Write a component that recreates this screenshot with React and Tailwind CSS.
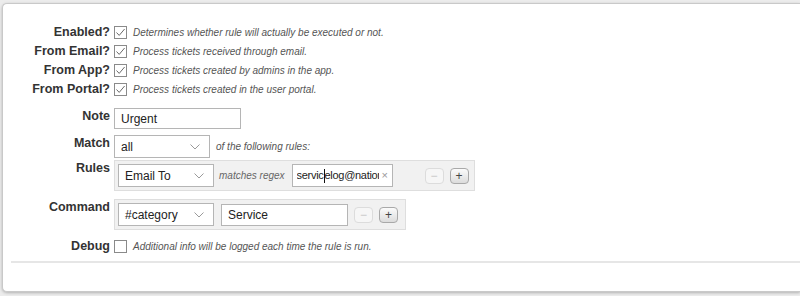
import React from 'react';

const font = { fontFamily: '"Liberation Sans", Arial, sans-serif' };

function Check({ checked }) {
  return (
    <span className="inline-flex h-[13px] w-[13px] shrink-0 items-center justify-center border border-[#8a8a8a] bg-white">
      {checked && (
        <svg width="11" height="11" viewBox="0 0 11 11">
          <path d="M1.5 5.5 L4.2 8.4 L9.6 2" fill="none" stroke="#6a6a6a" strokeWidth="1" />
        </svg>
      )}
    </span>
  );
}

function Chevron() {
  return (
    <svg width="10" height="6" viewBox="0 0 10 6" className="shrink-0">
      <path d="M0.5 0.5 L5 5 L9.5 0.5" fill="none" stroke="#9a9a9a" strokeWidth="1" />
    </svg>
  );
}

function Select({ value }) {
  return (
    <div className="flex h-[23px] w-[96px] shrink-0 items-center justify-between border border-[#b5b5b5] bg-white pl-[6px] pr-[9px] text-[12px] text-[#222]">
      <span>{value}</span>
      <Chevron />
    </div>
  );
}

function SmallButton({ children, disabled }) {
  return (
    <span
      className={`flex h-[16px] w-[19px] shrink-0 items-center justify-center rounded-[4px] border text-[12px] leading-none ${
        disabled
          ? 'border-[#dcdcdc] bg-[#f6f6f6] text-[#c8c8c8]'
          : 'border-[#a9a9a9] bg-gradient-to-b from-[#fbfbfb] to-[#dcdcdc] text-[#444]'
      }`}
    >
      {children}
    </span>
  );
}

function CheckRow({ label, checked, text }) {
  return (
    <div className="flex h-[19px] items-center gap-[4px]">
      <div className="w-[107px] text-right text-[12.5px] font-bold text-[#333]">{label}</div>
      <Check checked={checked} />
      <span className="pl-[2px] text-[10px] italic text-[#555]">{text}</span>
    </div>
  );
}

function Field({ label, children, className = '' }) {
  return (
    <div className={`flex items-start gap-[4px] ${className}`}>
      <div className="w-[107px] pt-[1px] text-right text-[12.5px] font-bold leading-[14px] text-[#333]">{label}</div>
      {children}
    </div>
  );
}

export default function App() {
  return (
    <div className="h-[296px] w-[800px] overflow-hidden bg-[#ececec] pl-[2px] pt-[3px]" style={font}>
      <div className="h-[289px] rounded-l-[5px] border border-r-0 border-[#c9c9c9] bg-white pt-[19px] shadow-[0_1px_3px_rgba(0,0,0,0.25)]">
        <CheckRow label="Enabled?" checked text="Determines whether rule will actually be executed or not." />
        <CheckRow label="From Email?" checked text="Process tickets received through email." />
        <CheckRow label="From App?" checked text="Process tickets created by admins in the app." />
        <CheckRow label="From Portal?" checked text="Process tickets created in the user portal." />

        <Field label="Note" className="mt-[9px]">
          <div className="flex h-[21px] w-[127px] items-center border border-[#b5b5b5] bg-white px-[6px] text-[12px] text-[#222]">
            Urgent
          </div>
        </Field>

        <Field label="Match" className="mt-[6px]">
          <Select value="all" />
          <span className="ml-[2px] self-center text-[10px] italic text-[#555]">of the following rules:</span>
        </Field>

        <Field label="Rules" className="mt-[2px]">
          <div className="flex h-[31px] w-[361px] items-center border border-[#dedede] bg-[#f1f1f1] pl-[3px]">
            <Select value="Email To" />
            <span className="ml-[5px] text-[10px] italic text-[#666]">matches regex</span>
            <div className="ml-[7px] flex h-[23px] w-[101px] shrink-0 items-center border border-[#b5b5b5] bg-white pl-[4px] pr-[4px] text-[11px] tracking-[-0.3px] text-[#222]">
              <span className="min-w-0 flex-1 overflow-hidden whitespace-nowrap">
                servic<span className="inline-block h-[14px] w-0 border-l border-[#111] align-middle" />elog@nationalse
              </span>
              <span className="ml-[2px] shrink-0 text-[11px] leading-none text-[#999]">×</span>
            </div>
            <div className="ml-[32px] flex gap-[6px]">
              <SmallButton disabled>−</SmallButton>
              <SmallButton>+</SmallButton>
            </div>
          </div>
        </Field>

        <Field label="Command" className="mt-[8px]">
          <div className="flex h-[31px] w-[292px] items-center border border-[#dedede] bg-[#f1f1f1] pl-[3px]">
            <Select value="#category" />
            <div className="ml-[7px] flex h-[22px] w-[127px] items-center border border-[#b5b5b5] bg-white px-[6px] text-[12px] text-[#222]">
              Service
            </div>
            <div className="ml-[6px] flex gap-[6px]">
              <SmallButton disabled>−</SmallButton>
              <SmallButton>+</SmallButton>
            </div>
          </div>
        </Field>

        <div className="mt-[8px] flex h-[17px] items-center gap-[4px]">
          <div className="w-[107px] text-right text-[12.5px] font-bold text-[#333]">Debug</div>
          <Check />
          <span className="pl-[2px] text-[10px] italic text-[#555]">Additional info will be logged each time the rule is run.</span>
        </div>

        <div className="ml-[8px] mt-[6px] h-[2px] bg-[#e6e6e6]" />
      </div>
    </div>
  );
}
